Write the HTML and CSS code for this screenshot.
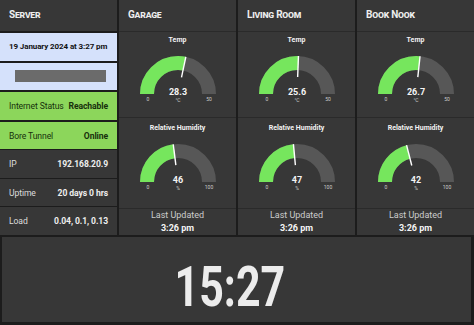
FILE: index.html
```html
<!DOCTYPE html>
<html lang="en">
<head>
    <meta charset="UTF-8">
    <title>Home Dashboard</title>
    <link rel="stylesheet" href="styles.css">
</head>
<body>
<div class="dash">
    <div class="top">

        <!-- Server column -->
        <section class="server">
            <h2 class="title">Server</h2>
            <div class="row blue date">19 January 2024 at 3:27 pm</div>
            <div class="row blue"><span class="redacted"></span></div>
            <div class="row green"><span>Internet Status</span><b>Reachable</b></div>
            <div class="row green"><span>Bore Tunnel</span><b>Online</b></div>
            <div class="row grey"><span>IP</span><b>192.168.20.9</b></div>
            <div class="row grey"><span>Uptime</span><b>20 days 0 hrs</b></div>
            <div class="row grey"><span>Load</span><b>0.04, 0.1, 0.13</b></div>
        </section>

        <!-- Garage -->
        <section class="room">
            <h2 class="title">Garage</h2>
            <div class="gauge-box temp">
                <div class="label">Temp</div>
                <svg class="gauge" width="80" height="50" viewBox="0 0 80 50">
                    <path class="track" d="M 9 39 A 31 31 0 0 1 71 39"/>
                    <path class="fill" d="M 9 39 A 31 31 0 0 1 71 39" pathLength="100" stroke-dasharray="56.6 200"/>
                    <line class="needle" x1="40" y1="22" x2="40" y2="1" transform="rotate(11.9 40 39)"/>
                    <text class="val" x="40" y="39.5">28.3</text>
                    <text class="unit" x="40" y="47">°C</text>
                    <text class="unit" x="10" y="46">0</text>
                    <text class="unit" x="71" y="46">50</text>
                </svg>
            </div>
            <div class="gauge-box hum">
                <div class="label">Relative Humidity</div>
                <svg class="gauge" width="80" height="50" viewBox="0 0 80 50">
                    <path class="track" d="M 9 39 A 31 31 0 0 1 71 39"/>
                    <path class="fill" d="M 9 39 A 31 31 0 0 1 71 39" pathLength="100" stroke-dasharray="46 200"/>
                    <line class="needle" x1="40" y1="22" x2="40" y2="1" transform="rotate(-7.2 40 39)"/>
                    <text class="val" x="40" y="39.5">46</text>
                    <text class="unit" x="40" y="47">%</text>
                    <text class="unit" x="10" y="46">0</text>
                    <text class="unit" x="71" y="46">100</text>
                </svg>
            </div>
            <div class="updated">Last Updated<b>3:26 pm</b></div>
        </section>

        <!-- Living Room -->
        <section class="room">
            <h2 class="title">Living Room</h2>
            <div class="gauge-box temp">
                <div class="label">Temp</div>
                <svg class="gauge" width="80" height="50" viewBox="0 0 80 50">
                    <path class="track" d="M 9 39 A 31 31 0 0 1 71 39"/>
                    <path class="fill" d="M 9 39 A 31 31 0 0 1 71 39" pathLength="100" stroke-dasharray="51.2 200"/>
                    <line class="needle" x1="40" y1="22" x2="40" y2="1" transform="rotate(2.2 40 39)"/>
                    <text class="val" x="40" y="39.5">25.6</text>
                    <text class="unit" x="40" y="47">°C</text>
                    <text class="unit" x="10" y="46">0</text>
                    <text class="unit" x="71" y="46">50</text>
                </svg>
            </div>
            <div class="gauge-box hum">
                <div class="label">Relative Humidity</div>
                <svg class="gauge" width="80" height="50" viewBox="0 0 80 50">
                    <path class="track" d="M 9 39 A 31 31 0 0 1 71 39"/>
                    <path class="fill" d="M 9 39 A 31 31 0 0 1 71 39" pathLength="100" stroke-dasharray="47 200"/>
                    <line class="needle" x1="40" y1="22" x2="40" y2="1" transform="rotate(-5.4 40 39)"/>
                    <text class="val" x="40" y="39.5">47</text>
                    <text class="unit" x="40" y="47">%</text>
                    <text class="unit" x="10" y="46">0</text>
                    <text class="unit" x="71" y="46">100</text>
                </svg>
            </div>
            <div class="updated">Last Updated<b>3:26 pm</b></div>
        </section>

        <!-- Book Nook -->
        <section class="room">
            <h2 class="title">Book Nook</h2>
            <div class="gauge-box temp">
                <div class="label">Temp</div>
                <svg class="gauge" width="80" height="50" viewBox="0 0 80 50">
                    <path class="track" d="M 9 39 A 31 31 0 0 1 71 39"/>
                    <path class="fill" d="M 9 39 A 31 31 0 0 1 71 39" pathLength="100" stroke-dasharray="53.4 200"/>
                    <line class="needle" x1="40" y1="22" x2="40" y2="1" transform="rotate(6.1 40 39)"/>
                    <text class="val" x="40" y="39.5">26.7</text>
                    <text class="unit" x="40" y="47">°C</text>
                    <text class="unit" x="10" y="46">0</text>
                    <text class="unit" x="71" y="46">50</text>
                </svg>
            </div>
            <div class="gauge-box hum">
                <div class="label">Relative Humidity</div>
                <svg class="gauge" width="80" height="50" viewBox="0 0 80 50">
                    <path class="track" d="M 9 39 A 31 31 0 0 1 71 39"/>
                    <path class="fill" d="M 9 39 A 31 31 0 0 1 71 39" pathLength="100" stroke-dasharray="42 200"/>
                    <line class="needle" x1="40" y1="22" x2="40" y2="1" transform="rotate(-14.4 40 39)"/>
                    <text class="val" x="40" y="39.5">42</text>
                    <text class="unit" x="40" y="47">%</text>
                    <text class="unit" x="10" y="46">0</text>
                    <text class="unit" x="71" y="46">100</text>
                </svg>
            </div>
            <div class="updated">Last Updated<b>3:26 pm</b></div>
        </section>
    </div>

    <!-- Clock -->
    <div class="clock"><span>15:27</span></div>
</div>
</body>
</html>
```

FILE: styles.css
```css
* {
    margin: 0;
    padding: 0;
    box-sizing: border-box;
}

body {
    font-family: Roboto, 'Noto Sans', sans-serif;
    background-color: #1c1c1c;
    color: #eee;
}

.dash {
    width: 474px;
    height: 325px;
}

.top {
    display: grid;
    grid-template-columns: repeat(4, 117px);
    gap: 2px;
    height: 235px;
}

/* Headers */
.title {
    height: 31px;
    padding: 9px 0 0 9px;
    font-size: 10px;
    font-weight: 700;
    font-variant: small-caps;
    letter-spacing: -0.2px;
    color: #eee;
    background-color: #373737;
}

/* Server column */
.server {
    display: flex;
    flex-direction: column;
    gap: 2px;
}

.row {
    flex: 1;
    display: flex;
    align-items: center;
    justify-content: space-between;
    padding: 0 9px;
    font-size: 8.6px;
    letter-spacing: -0.1px;
    white-space: nowrap;
}

.row b {
    font-weight: 700;
}

.blue {
    background-color: #d5e1fb;
    color: #111;
}

.date {
    font-size: 8px;
    font-weight: 700;
    letter-spacing: -0.1px;
}

.redacted {
    display: block;
    width: 91px;
    height: 12px;
    margin-left: 6px;
    background-color: #6b6b6b;
}

.green {
    background-color: #8cd65b;
    color: #17300c;
}

.grey {
    background-color: #373737;
    color: #ddd;
    margin-top: -1px;
}

.grey b {
    color: #eee;
}

/* Room panels */
.room {
    display: flex;
    flex-direction: column;
    background-color: #373737;
}

.room .title {
    border-bottom: 1px solid #2a2a2a;
    height: 32px;
}

.gauge-box {
    display: flex;
    flex-direction: column;
    align-items: center;
    border-bottom: 1px solid #2a2a2a;
}

.gauge-box.temp {
    height: 86px;
    padding-top: 3px;
}

.gauge-box.hum {
    height: 91px;
    padding-top: 5px;
}

.label {
    font-size: 7px;
    font-weight: 700;
    line-height: 10px;
    margin-bottom: 10px;
    color: #f2f2f2;
}

.gauge path {
    fill: none;
    stroke-width: 14;
}

.gauge .track {
    stroke: #575757;
}

.gauge .fill {
    stroke: #76e65d;
}

.needle {
    stroke: #fff;
    stroke-width: 1.4;
}

.gauge text {
    text-anchor: middle;
    font-family: Roboto, sans-serif;
}

.gauge .val {
    font-size: 9px;
    font-weight: 700;
    fill: #f4f4f4;
}

.gauge .unit {
    font-size: 5px;
    fill: #ccc;
}

.updated {
    flex: 1;
    display: flex;
    flex-direction: column;
    align-items: center;
    padding-top: 0;
    font-size: 9px;
    line-height: 13px;
    color: #ccc;
}

.updated b {
    color: #f4f4f4;
}

/* Clock */
.clock {
    display: flex;
    justify-content: center;
    align-items: center;
    height: 85px;
    margin: 2px 3px 3px 2px;
    padding: 15px 13px 0 0;
    background-color: #373737;
}

.clock span {
    display: inline-block;
    font-size: 55px;
    font-weight: 700;
    color: #ececec;
    transform: scaleX(0.78);
}
```
